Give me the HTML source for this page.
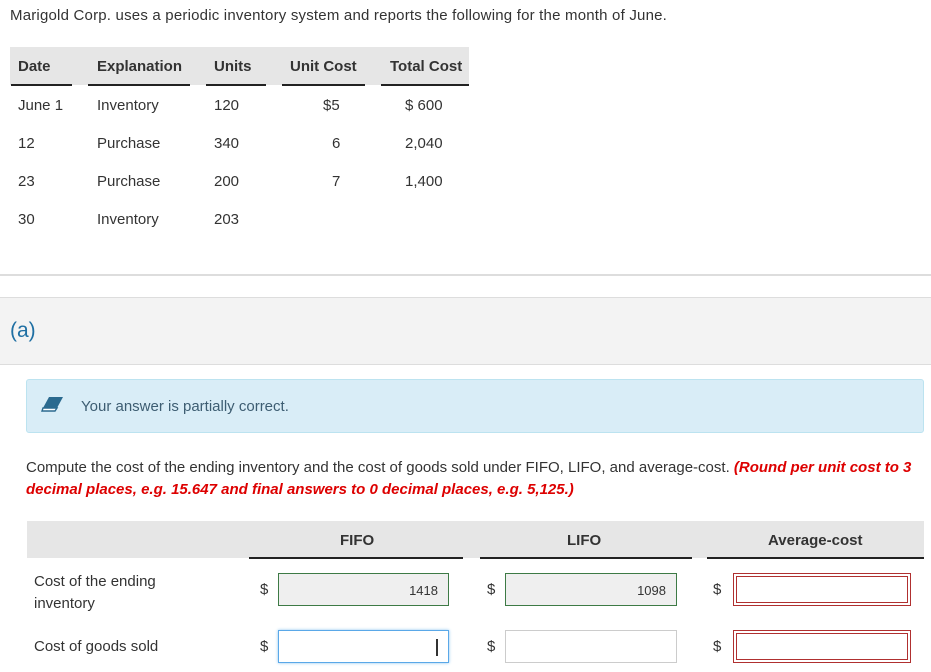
<!DOCTYPE html>
<html><head><style>
body{margin:0;width:931px;height:672px;overflow:hidden;background:#fff;font-family:"Liberation Sans",sans-serif;color:#333;font-size:15px;position:relative}
.a{position:absolute;white-space:nowrap}
.hl{position:absolute;height:2px;background:#222}
.in{position:absolute;box-sizing:border-box;height:33px}
</style></head><body>
<div class="a" style="left:10px;top:7px;font-size:15px;letter-spacing:0.2px">Marigold Corp. uses a periodic inventory system and reports the following for the month of June.</div>
<div class="a" style="left:10px;top:47px;width:459px;height:38px;background:#e6e6e6"></div>
<div class="a" style="left:18px;top:58px;font-weight:bold">Date</div>
<div class="a" style="left:97px;top:58px;font-weight:bold">Explanation</div>
<div class="a" style="left:214px;top:58px;font-weight:bold">Units</div>
<div class="a" style="left:290px;top:58px;font-weight:bold">Unit Cost</div>
<div class="a" style="left:390px;top:58px;font-weight:bold">Total Cost</div>
<div class="hl" style="left:11px;top:84px;width:61px"></div>
<div class="hl" style="left:88px;top:84px;width:102px"></div>
<div class="hl" style="left:206px;top:84px;width:60px"></div>
<div class="hl" style="left:282px;top:84px;width:83px"></div>
<div class="hl" style="left:381px;top:84px;width:88px"></div>
<div class="a" style="left:18px;top:97px">June 1</div><div class="a" style="left:97px;top:97px">Inventory</div><div class="a" style="left:214px;top:97px">120</div><div class="a" style="left:323px;top:97px">$5</div><div class="a" style="left:405px;top:97px">$ 600</div>
<div class="a" style="left:18px;top:135px">12</div><div class="a" style="left:97px;top:135px">Purchase</div><div class="a" style="left:214px;top:135px">340</div><div class="a" style="left:332px;top:135px">6</div><div class="a" style="left:405px;top:135px">2,040</div>
<div class="a" style="left:18px;top:173px">23</div><div class="a" style="left:97px;top:173px">Purchase</div><div class="a" style="left:214px;top:173px">200</div><div class="a" style="left:332px;top:173px">7</div><div class="a" style="left:405px;top:173px">1,400</div>
<div class="a" style="left:18px;top:211px">30</div><div class="a" style="left:97px;top:211px">Inventory</div><div class="a" style="left:214px;top:211px">203</div>
<div class="a" style="left:0;top:274px;width:931px;height:2px;background:#ddd"></div>
<div class="a" style="left:0;top:297px;width:931px;height:66px;background:#f3f3f3;border-top:1px solid #ddd;border-bottom:1px solid #ddd"></div>
<div class="a" style="left:10px;top:319px;font-size:21px;color:#1f6fa3">(a)</div>
<div class="a" style="left:26px;top:379px;width:896px;height:52px;background:#d9edf7;border:1px solid #bce3f0;border-radius:3px"></div>
<svg class="a" style="left:40px;top:395px" width="26" height="18" viewBox="0 0 26 18"><path d="M9 2H23L17 13H3Z" fill="#2b6a8f"/><path d="M3 13H17L15 16H2Z" fill="#fff" stroke="#2b6a8f" stroke-width="1.4"/></svg>
<div class="a" style="left:81px;top:398px;font-size:15px;color:#3d5d72">Your answer is partially correct.</div>
<div class="a" style="left:26px;top:457px;font-size:15px;line-height:22px">Compute the cost of the ending inventory and the cost of goods sold under FIFO, LIFO, and average-cost. <b style="color:#d00;font-style:italic">(Round per unit cost to 3</b><br><b style="color:#d00;font-style:italic">decimal places, e.g. 15.647 and final answers to 0 decimal places, e.g. 5,125.)</b></div>
<div class="a" style="left:27px;top:521px;width:897px;height:37px;background:#e6e6e6"></div>
<div class="a" style="left:340px;top:532px;font-weight:bold">FIFO</div>
<div class="a" style="left:567px;top:532px;font-weight:bold">LIFO</div>
<div class="a" style="left:768px;top:532px;font-weight:bold">Average-cost</div>
<div class="hl" style="left:249px;top:557px;width:214px"></div>
<div class="hl" style="left:480px;top:557px;width:212px"></div>
<div class="hl" style="left:707px;top:557px;width:217px"></div>
<div class="a" style="left:34px;top:571px;line-height:22px">Cost of the ending<br>inventory</div>
<div class="a" style="left:34px;top:638px">Cost of goods sold</div>
<div class="a" style="left:260px;top:581px">$</div><div class="a" style="left:487px;top:581px">$</div><div class="a" style="left:713px;top:581px">$</div>
<div class="a" style="left:260px;top:638px">$</div><div class="a" style="left:487px;top:638px">$</div><div class="a" style="left:713px;top:638px">$</div>
<div class="in" style="left:278px;top:573px;width:171px;background:#efefef;border:1px solid #3d7a45;text-align:right;padding:9px 10px;font-size:13px">1418</div>
<div class="in" style="left:505px;top:573px;width:172px;background:#efefef;border:1px solid #3d7a45;text-align:right;padding:9px 10px;font-size:13px">1098</div>
<div class="in" style="left:733px;top:573px;width:178px;border:1px solid #b03030;box-shadow:inset 0 0 0 2px #fff,inset 0 0 0 3px #b03030"></div>
<div class="in" style="left:278px;top:630px;width:171px;border:1px solid #5aa8e8;box-shadow:0 0 3px #8cc4f0"><div style="position:absolute;right:10px;top:8px;width:2px;height:17px;background:#333"></div></div>
<div class="in" style="left:505px;top:630px;width:172px;border:1px solid #ccc"></div>
<div class="in" style="left:733px;top:630px;width:178px;border:1px solid #b03030;box-shadow:inset 0 0 0 2px #fff,inset 0 0 0 3px #b03030"></div>
</body></html>
